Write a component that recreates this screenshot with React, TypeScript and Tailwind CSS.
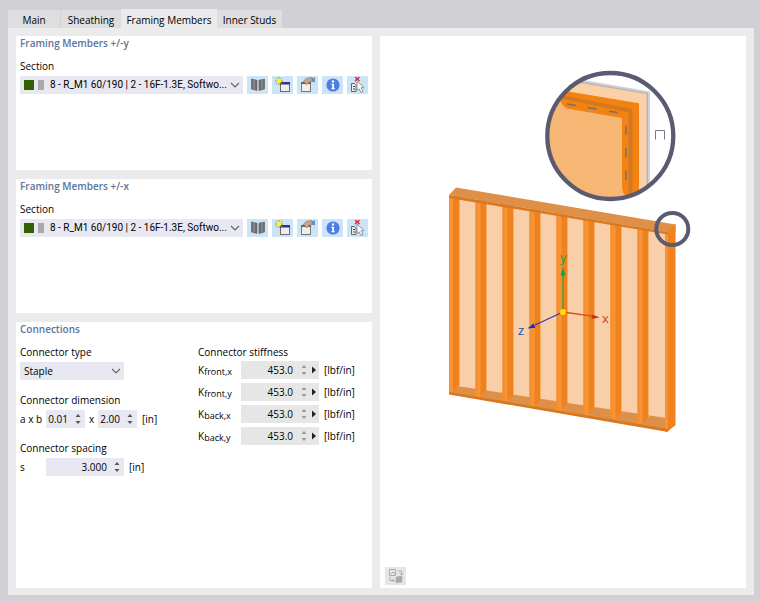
import React from "react";

const TABS = ["Main", "Sheathing", "Framing Members", "Inner Studs"];
const SECTION = "8 - R_M1 60/190 | 2 - 16F-1.3E, Softwo...";

function Chevron({ className }: { className: string }) {
  return (
    <svg viewBox="0 0 10 6" className={`pointer-events-none absolute h-[6px] w-[10px] ${className}`} fill="none" stroke="#666" strokeWidth="1.2">
      <path d="M1 1l4 4 4-4" />
    </svg>
  );
}

function BookIcon() {
  return (
    <svg viewBox="0 0 16 16" className="size-4">
      <path d="M1.500 2L7 3.200V13.500L1.500 12zM14.500 2L9 3.200V13.500l5.500-1.500z" fill="#6d6d6d" stroke="#5a5a5a" strokeWidth=".6" />
      <path d="M4 2.500V12.500M12 2.500V12.500" stroke="#9a9a9a" strokeWidth="1" />
    </svg>
  );
}

function NewIcon() {
  return (
    <svg viewBox="0 0 16 16" className="size-4">
      <rect x="5.500" y="5.500" width="9" height="9" fill="#f1eee9" stroke="#6b6b6b" />
      <rect x="5" y="5" width="10" height="2.500" fill="#34348c" />
      <path d="M4 0v8M0 4h8M1 1l6 6M7 1L1 7" stroke="#8f9a30" strokeWidth="1" />
      <circle cx="4" cy="4" r="2.400" fill="#fbf22a" />
    </svg>
  );
}

function EditIcon() {
  return (
    <svg viewBox="0 0 16 16" className="size-4">
      <rect x="1.500" y="5.500" width="9" height="9" fill="#f1eee9" stroke="#777" />
      <path d="M1 5h10v2H1z" fill="#666" />
      <path d="M3 5l3-3.500 5-1 2 1v3l-4 .5-1 2-2 .5-1-2z" fill="#c9a48a" stroke="#8b7262" strokeWidth=".6" />
      <path d="M11.500 1l3.500-.5v5l-3.500-1.500z" fill="#5f92c8" />
    </svg>
  );
}

function InfoIcon() {
  return (
    <svg viewBox="0 0 16 16" className="size-4">
      <circle cx="8" cy="8" r="6.600" fill="#4f7de3" />
      <circle cx="8" cy="4.500" r="1.200" fill="#fff" />
      <path d="M6.300 6.700h2.700v4.500h1v1H6.200v-1h1V7.700h-.9z" fill="#fff" />
    </svg>
  );
}

function PickIcon() {
  return (
    <svg viewBox="0 0 16 16" className="size-4">
      <path d="M1.500 6.500h3l1.500 2v6H1.500z" fill="#eee" stroke="#666" />
      <path d="M3 9.500h2M3 12h2" stroke="#444" />
      <path d="M7 4l7 6.500-3 .3 2 3.700-2 1-2-3.700-2 2z" fill="#fff" stroke="#888" strokeWidth=".9" />
      <path d="M5 0l4.500 4M9.500 0L5 4" stroke="#dc2835" strokeWidth="1.500" />
    </svg>
  );
}

const TOOLS = [
  { name: "Section library", Icon: BookIcon },
  { name: "New section", Icon: NewIcon },
  { name: "Edit section", Icon: EditIcon },
  { name: "Section information", Icon: InfoIcon },
  { name: "Select in model", Icon: PickIcon },
];

function Heading({ children }: { children: React.ReactNode }) {
  return <h2 className="h-[15px] font-semibold leading-[15px] text-[#5d7399]">{children}</h2>;
}

function SectionPanel({ title, id }: { title: string; id: string }) {
  return (
    <section className="h-[134px] bg-white px-1">
      <Heading>{title}</Heading>
      <label htmlFor={id} className="mt-[7px] block h-4 leading-4">Section</label>
      <div className="mt-[2px] flex gap-1">
        <div className="relative min-w-0 flex-1">
          <select id={id} className="block h-[18px] w-full appearance-none bg-[#e8e8f3] pl-[30px] pr-3 font-[Roboto,sans-serif] font-normal leading-[18px] outline-none">
            <option>{SECTION}</option>
          </select>
          <span className="pointer-events-none absolute left-1 top-1 size-[10px] bg-[#336000]" />
          <span className="pointer-events-none absolute left-[18px] top-1 h-[10px] w-[6px] bg-[#aaa]" />
          <Chevron className="right-[3px] top-[6px]" />
        </div>
        {TOOLS.map(({ name, Icon }) => (
          <button key={name} type="button" aria-label={name} className="flex h-[18px] w-[21px] items-center justify-center bg-[#cce4f7]">
            <Icon />
          </button>
        ))}
      </div>
    </section>
  );
}

function Spinner({ id, value, label, width, muted = false }: { id: string; value: string; label?: string; width: string; muted?: boolean }) {
  return (
    <div className={`flex h-[18px] items-center ${width} ${muted ? "bg-[#e6e6e6]" : "bg-[#e8e8f3]"}`}>
      <input id={id} aria-label={label} defaultValue={value} className="h-[18px] w-0 min-w-0 flex-1 bg-transparent text-right outline-none" />
      <svg viewBox="0 0 6 12" className={`h-3 w-[6px] shrink-0 ${muted ? "ml-2 mr-[5px]" : "ml-[7px] mr-1"}`} fill={muted ? "#999" : "#555"}>
        <path d="M3 1l2.500 3h-5zM3 11l2.500-3h-5z" />
      </svg>
      {muted && (
        <button type="button" aria-label="More options" className="mr-[3px] shrink-0">
          <svg viewBox="0 0 4 8" className="h-2 w-1" fill="#222"><path d="M0 .5l4 3.500-4 3.500z" /></svg>
        </button>
      )}
    </div>
  );
}

function Connections() {
  return (
    <section className="flex-1 bg-white px-1">
      <Heading>Connections</Heading>
      <div className="mt-[7px] flex">
        <div className="w-[178px]">
          <label htmlFor="type" className="block h-4 leading-4">Connector type</label>
          <div className="relative mt-[2px] w-[104px]">
            <select id="type" className="block h-[18px] w-full appearance-none bg-[#e8e8f3] pl-1 leading-[18px] outline-none">
              <option>Staple</option>
            </select>
            <Chevron className="right-[3px] top-[6px]" />
          </div>
          <h3 className="mt-3 h-4 leading-4">Connector dimension</h3>
          <div className="mt-[2px] flex h-[18px] items-center">
            <span className="w-[26px]">a x b</span>
            <Spinner id="dim-a" label="Dimension a" value="0.01" width="w-[39px]" />
            <span className="w-[13px] pl-1">x</span>
            <Spinner id="dim-b" label="Dimension b" value="2.00" width="w-[39px]" />
            <span className="ml-[5px]">[in]</span>
          </div>
          <h3 className="mt-3 h-4 leading-4">Connector spacing</h3>
          <div className="mt-[2px] flex h-[18px] items-center">
            <label htmlFor="spacing" className="w-[26px]">s</label>
            <Spinner id="spacing" value="3.000" width="w-[78px]" />
            <span className="ml-[5px]">[in]</span>
          </div>
        </div>
        <div>
          <h3 className="h-4 leading-4">Connector stiffness</h3>
          <div className="mt-px flex flex-col gap-1">
            {["front,x", "front,y", "back,x", "back,y"].map((k) => (
              <div key={k} className="flex h-[18px] items-center">
                <label htmlFor={k} className="w-[43px]">K<span className="relative top-px text-[9px] font-normal">{k}</span></label>
                <Spinner id={k} value="453.0" width="w-[78px]" muted />
                <span className="ml-[5px]">[lbf/in]</span>
              </div>
            ))}
          </div>
        </div>
      </div>
    </section>
  );
}

const STUDS = [1, 2, 3, 4, 5, 6, 7];

function WallDrawing() {
  return (
    <svg viewBox="380 36 366 552" className="block h-auto w-full" role="img" aria-label="Framed wall with connector detail">
      <defs>
        <clipPath id="lens"><circle cx="610.300" cy="136" r="63" /></clipPath>
      </defs>
      <path d="M450 194L668 233V431L450 394z" fill="#f9cfaa" />
      <path d="M450 394l7-8L666 418l9 7-7 6z" fill="#de9048" />
      <path d="M449 196h10.500v189l-7.500 8h-3z" fill="#f0811c" />
      <path d="M449 196h4v196l-4 2z" fill="#f79436" />
      {STUDS.map((i) => {
        const x = 449 + i * 27;
        const y = 196 + i * 4.300;
        const b = 393 + i * 4.400;
        return (
          <g key={i}>
            <path d={`M${x - 0.500} ${y}h11v${b - y - 7}l-6 6-5 1z`} fill="#f0811c" />
            <path d={`M${x - 0.500} ${y}h5v${b - y}l-5 0z`} fill="#f79436" />
            <path d={`M${x + 1} ${y}v${b - y}`} stroke="#ee8524" strokeWidth=".5" />
            <path d={`M${x + 10.500} ${y}v${b - y - 7}`} stroke="#efb16d" strokeWidth=".7" />
          </g>
        );
      })}
      <path d="M665 231l10.500-7v201l-7.500 6-3-1z" fill="#f0811c" />
      <path d="M665 232h3v198l-3 0z" fill="#f79436" />
      <path d="M449 392l219 37v3l-219-37.500z" fill="#da761b" />
      <path d="M449 195l219 37v2.500L449 198z" fill="#db791f" />
      <path d="M449 195l7-7.500 219.500 37-7.500 8z" fill="#de9048" />
      <path d="M668 233l7.500-8.500v8.500z" fill="#f0811c" />
      <g fontFamily="'Open Sans', sans-serif" fontSize="13" fontWeight="500">
        <path d="M563 312V274" stroke="#55a02f" strokeWidth="1.500" />
        <path d="M563 267.500l2.500 8h-5z" fill="#0ba652" />
        <text x="560" y="262" fill="#24a247">y</text>
        <path d="M563 312l29 4.200" stroke="#d84b15" strokeWidth="1.300" />
        <path d="M599.500 317.500l-8 1.500.7-4.500z" fill="#c9340d" />
        <text x="602" y="323" fill="#cd421c">x</text>
        <path d="M563 312l-28 13" stroke="#333ba9" strokeWidth="1.300" />
        <path d="M527.500 328.500l6-5 2 4.300z" fill="#1433bc" />
        <text x="518" y="335" fill="#2849b9">z</text>
        <circle cx="563" cy="312" r="3" fill="#ffe100" />
      </g>
      <circle cx="610.300" cy="136" r="63" fill="#fff" />
      <g clipPath="url(#lens)">
        <path d="M560 76l90 15.500v115h-80z" fill="#d0d0d6" />
        <path d="M560 78l88 15v115h-80z" fill="#b5b4b8" />
        <path d="M550 78l96.500 16V208h-85z" fill="#fbd0a5" />
        <path d="M550 88.500l89 14.800v105h-89z" fill="#f28212" />
        <path d="M550 93l82.500 16v100H550z" fill="#d27820" />
        <path d="M560 98l68.500 14.500V196l-6.500 8H550V96z" fill="#f28212" />
        <path d="M540 96l20 3q1 6 7 9.500l55 9.500V186q0 8 6 11v15h-88z" fill="#f7b774" />
        <path d="M567 104l9 1.400M587.500 107.700l9 1.400M609 111.200l8.500 1.400M626 126v8.500M626 148v9M626 171v9" stroke="#77706b" strokeWidth="1.500" />
      </g>
      <circle cx="610.300" cy="136" r="63" fill="none" stroke="#5a5a70" strokeWidth="4.300" />
      <path d="M655.500 139.500v-9h9v9" fill="none" stroke="#77788a" />
      <circle cx="672.300" cy="229" r="16" fill="none" stroke="#5a5a70" strokeWidth="4" />
    </svg>
  );
}

export default function App() {
  return (
    <main className="flex min-h-screen flex-col bg-[#d0d0d5] pb-[6px] pl-2 pr-[6px] pt-[9px] font-['Open_Sans','Noto_Sans',sans-serif] text-[10px] font-medium text-black">
      <nav className="flex h-[19px] items-end" role="tablist">
        {TABS.map((tab) =>
          tab === "Framing Members" ? (
            <button key={tab} type="button" role="tab" aria-selected="true" className="h-[19px] w-[96px] bg-[#ebebeb] pt-[3px]">{tab}</button>
          ) : (
            <button key={tab} type="button" role="tab" aria-selected="false" className={`h-[18px] bg-[#dedede] pt-[2px] ${tab === "Main" ? "w-[53px] border-r border-[#d2d2d2]" : tab === "Sheathing" ? "w-[60px]" : "w-[65px]"}`}>{tab}</button>
          ),
        )}
      </nav>
      <div className="flex flex-1 gap-2 bg-[#ebebeb] px-2 pb-[7px] pt-2">
        <div className="flex w-[356px] shrink-0 flex-col gap-[9px]">
          <SectionPanel title="Framing Members +/-y" id="section-y" />
          <SectionPanel title="Framing Members +/-x" id="section-x" />
          <Connections />
        </div>
        <section className="relative min-w-0 flex-1 bg-white">
          <WallDrawing />
          <button type="button" aria-label="Swap picture" className="absolute bottom-[3px] left-[5px] flex h-[18px] w-[21px] items-center justify-center bg-[#e6e6e6]">
            <svg viewBox="0 0 16 16" className="size-4" fill="none" stroke="#aaa">
              <path d="M1.500 1.500h6v6h-6zM3 6l2-2 2 2M10 3h3.500v4M12 5.500l1.500 1.500L15 5.500M2 9v3.500h4M4.500 11L6 12.500 4.500 14" />
              <path d="M8 9l6-1v3l-6 1zM8 12l6-1v3l-6 1z" fill="#aaa" strokeWidth=".5" />
            </svg>
          </button>
        </section>
      </div>
    </main>
  );
}
